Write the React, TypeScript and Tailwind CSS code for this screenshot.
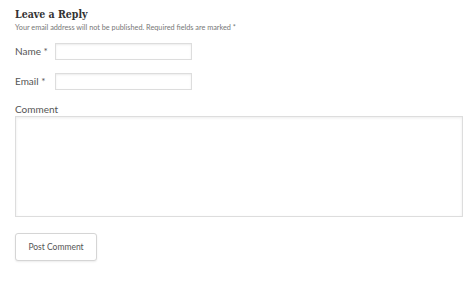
export default function App() {
  return (
    <div className="w-[474px] h-[292px] bg-white text-[#555]" style={{ fontFamily: "Lato, 'Open Sans', sans-serif" }}>
      <div className="px-[15px] pt-[6px]">
        <h3 className="text-[10.5px] leading-[16px] font-bold text-[#333] [font-stretch:condensed]" style={{ fontFamily: "'DejaVu Serif Condensed', 'DejaVu Serif', serif" }}>Leave a Reply</h3>
        <p className="text-[7.3px] leading-[10px] text-[#777] mt-[1px]">Your email address will not be published. Required fields are marked *</p>
        <div className="flex items-center mt-[10px]">
          <label className="w-[40px] text-[10px] text-[#555]">Name *</label>
          <input className="w-[137px] h-[17px] border border-[#ddd] bg-white shadow-[inset_0_1px_2px_rgba(0,0,0,0.08)] outline-none" />
        </div>
        <div className="flex items-center mt-[13px]">
          <label className="w-[40px] text-[10px] text-[#555]">Email *</label>
          <input className="w-[137px] h-[17px] border border-[#ddd] bg-white shadow-[inset_0_1px_2px_rgba(0,0,0,0.08)] outline-none" />
        </div>
        <label className="block text-[10px] leading-[12px] mt-[13px] text-[#555]">Comment</label>
        <textarea className="block w-[448px] h-[101px] mt-[1px] border border-[#ddd] bg-white shadow-[inset_0_1px_3px_rgba(0,0,0,0.08)] resize-none outline-none" />
        <button className="mt-[16px] w-[82px] h-[28px] border border-[#d5d5d5] rounded-[3px] bg-white text-[8.5px] text-[#555] shadow-[0_1px_2px_rgba(0,0,0,0.08)]">Post Comment</button>
      </div>
    </div>
  );
}
